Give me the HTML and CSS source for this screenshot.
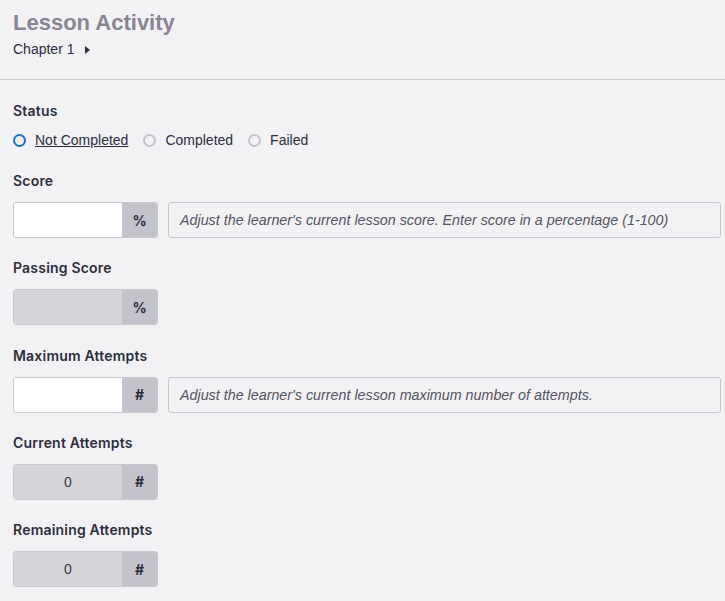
FILE: index.html
```html
<!DOCTYPE html>
<html lang="en">
<head>
    <meta charset="UTF-8">
    <meta name="viewport" content="width=device-width, initial-scale=1.0">
    <title>Lesson Activity</title>
    <link rel="stylesheet" href="styles.css">
</head>
<body>

<div class="header">
    <h1 class="title">Lesson Activity</h1>
    <div class="crumb">Chapter 1 <span class="caret"></span></div>
</div>

<form class="activity-form">
    <!-- status -->
    <div class="field status">
        <div class="field-label">Status</div>
        <div class="radios">
            <label class="radio active"><span class="dot"></span><span class="radio-text">Not Completed</span></label>
            <label class="radio"><span class="dot"></span><span class="radio-text">Completed</span></label>
            <label class="radio"><span class="dot"></span><span class="radio-text">Failed</span></label>
        </div>
    </div>

    <div class="field">
        <div class="field-label">Score</div>
        <div class="row">
            <div class="input-group">
                <input type="text" class="form-control">
                <span class="addon">%</span>
            </div>
            <div class="help">Adjust the learner's current lesson score. Enter score in a percentage (1-100)</div>
        </div>
    </div>

    <div class="field">
        <div class="field-label">Passing Score</div>
        <div class="row">
            <div class="input-group disabled">
                <input type="text" class="form-control" disabled>
                <span class="addon">%</span>
            </div>
        </div>
    </div>

    <div class="field">
        <div class="field-label">Maximum Attempts</div>
        <div class="row">
            <div class="input-group">
                <input type="text" class="form-control">
                <span class="addon">#</span>
            </div>
            <div class="help">Adjust the learner's current lesson maximum number of attempts.</div>
        </div>
    </div>

    <div class="field">
        <div class="field-label">Current Attempts</div>
        <div class="row">
            <div class="input-group disabled">
                <input type="text" class="form-control" value="0" disabled>
                <span class="addon">#</span>
            </div>
        </div>
    </div>

    <div class="field">
        <div class="field-label">Remaining Attempts</div>
        <div class="row">
            <div class="input-group disabled">
                <input type="text" class="form-control" value="0" disabled>
                <span class="addon">#</span>
            </div>
        </div>
    </div>
</form>

</body>
</html>
```

FILE: styles.css
```css
body {
    margin: 0;
    font-family: "Liberation Sans", Arial, sans-serif;
    background-color: #f2f2f5;
    color: #2e2d3d;
}
.header {
    padding: 10px 13px 0;
    height: 69px;
    border-bottom: 1px solid #c9c9ce;
}
.title {
    margin: 0;
    font-size: 22px;
    line-height: 26px;
    font-weight: bold;
    color: #878593;
}
.crumb {
    margin-top: 5px;
    font-size: 14px;
    line-height: 16px;
    color: #2e2d3d;
}
.caret {
    display: inline-block;
    width: 0;
    height: 0;
    margin-left: 7px;
    border-top: 4px solid transparent;
    border-bottom: 4px solid transparent;
    border-left: 5px solid #2e2d3d;
    vertical-align: 0;
}
.activity-form {
    padding: 21px 4px 0 13px;
}
.field {
    margin-bottom: 20.25px;
}
.field.status {
    margin-bottom: 23px;
}
.field-label {
    font-family: Inter, "Liberation Sans", sans-serif;
    font-size: 14px;
    letter-spacing: 0.2px;
    font-weight: 600;
    line-height: 20px;
    color: #2e2d3d;
    margin-bottom: 11px;
}
.radios {
    display: flex;
    gap: 15px;
    font-size: 14px;
    line-height: 16px;
    margin-top: 1px;
}
.radio {
    display: flex;
    align-items: center;
    gap: 9px;
}
.dot {
    width: 9px;
    height: 9px;
    border: 2px solid #c3c3ca;
    border-radius: 50%;
}
.radio.active .dot {
    border-color: #1b74cc;
}
.radio.active .radio-text {
    text-decoration: underline;
}
.row {
    display: flex;
    gap: 10px;
}
.input-group {
    display: flex;
    width: 145px;
    height: 36px;
    box-sizing: border-box;
    border: 1px solid #c8c8cf;
    border-radius: 3px;
    overflow: hidden;
    flex-shrink: 0;
}
.form-control {
    width: 108px;
    border: none;
    padding: 0;
    margin: 0;
    background-color: white;
    font-family: "Liberation Sans", Arial, sans-serif;
    font-size: 14px;
    color: #3a3a48;
    text-align: center;
    outline: none;
}
.input-group.disabled .form-control {
    background-color: #d5d5da;
}
.addon {
    flex: 1;
    display: flex;
    align-items: center;
    justify-content: center;
    background-color: #c3c3cb;
    font-family: Inter, "Liberation Sans", sans-serif;
    font-size: 14px;
    font-weight: 700;
    color: #2e2d3d;
}
.help {
    flex: 1;
    height: 36px;
    box-sizing: border-box;
    border: 1px solid #c8c8cf;
    border-radius: 3px;
    padding: 0 11px;
    display: flex;
    align-items: center;
    font-size: 14.3px;
    font-style: italic;
    color: #55545f;
}
```
